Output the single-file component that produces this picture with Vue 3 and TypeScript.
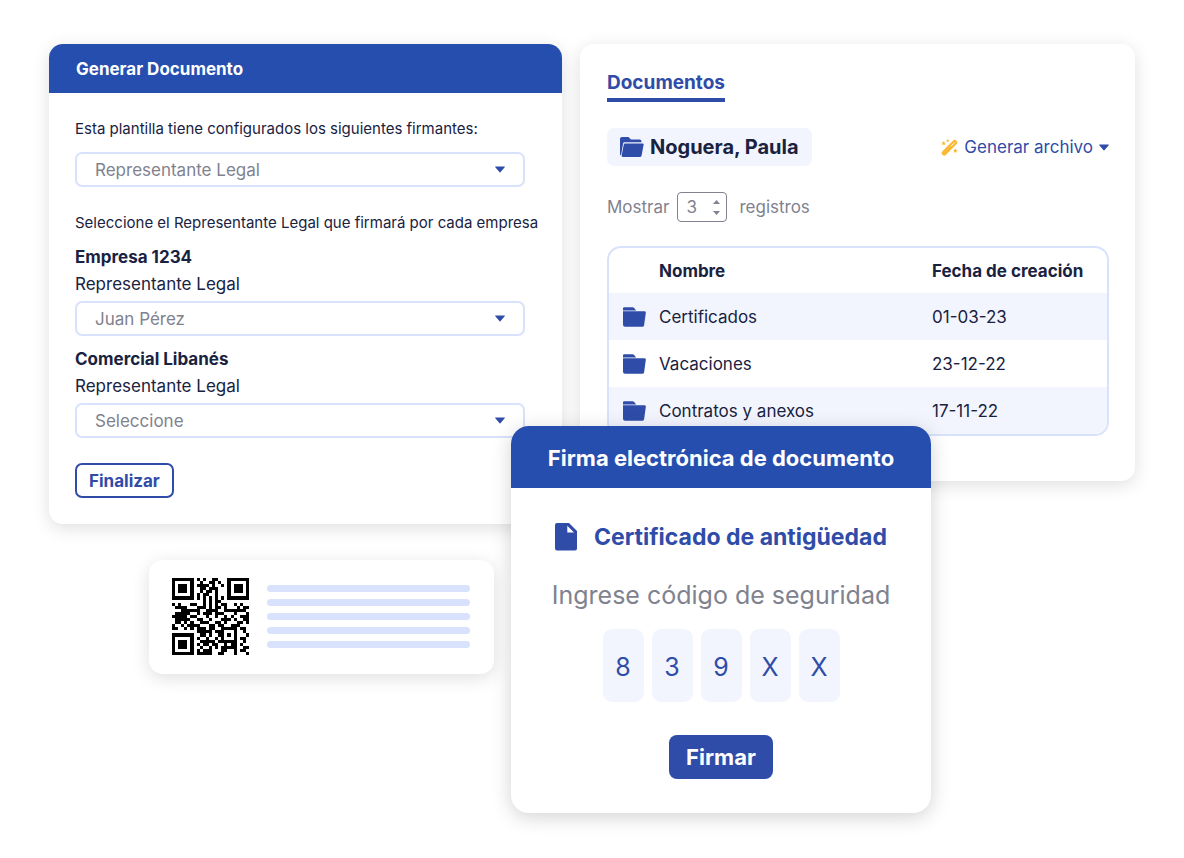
<script setup lang="ts">
import { ref } from 'vue'

interface DocumentFolder {
  name: string
  created: string
}

interface Company {
  id: string
  name: string
  signer: string
}

const template = ref('Representante Legal')
const pageSize = ref(3)
const code = ref<string[]>(['8', '3', '9', 'X', 'X'])

const companies = ref<Company[]>([
  { id: 'empresa', name: 'Empresa 1234', signer: 'Juan Pérez' },
  { id: 'comercial', name: 'Comercial Libanés', signer: 'Seleccione' },
])

const folders: DocumentFolder[] = [
  { name: 'Certificados', created: '01-03-23' },
  { name: 'Vacaciones', created: '23-12-22' },
  { name: 'Contratos y anexos', created: '17-11-22' },
]

const qrRows: string[] = [
  '1111111010100110001111111',
  '1000001001001101001000001',
  '1011101011110100101011101',
  '1011101001101110001011101',
  '1011101001011010001011101',
  '1000001010110010001000001',
  '1111111010101010101111111',
  '0000000000101011000000000',
  '1010001100101010110010100',
  '0111100011101011010001011',
  '0001111110011110011111110',
  '0111110010111011100010001',
  '1111101100010010010100111',
  '0111110011001000111010011',
  '0110101001110011010001101',
  '1001011110001101100111000',
  '1100101011101100111110110',
  '0000000011111011100010010',
  '1111111001101001101010001',
  '1000001010010010100010110',
  '1011101001111101111110010',
  '1011101010110110010110100',
  '1011101001001010111110011',
  '1000001010111000110010110',
  '1111111011111001100010001',
]

const qrPath = qrRows
  .flatMap((row, y) => [...row].map((cell, x) => (cell === '1' ? `M${x} ${y}h1v1h-1z` : '')))
  .join('')

const stepPageSize = (delta: number) => {
  pageSize.value = Math.max(1, pageSize.value + delta)
}
</script>

<template>
  <main class="board">
    <div class="column">
      <form class="card generator" @submit.prevent>
        <h2 class="generator-head">Generar Documento</h2>
        <div class="generator-body">
          <label class="hint" for="template">Esta plantilla tiene configurados los siguientes firmantes:</label>
          <div class="picker">
            <select id="template" v-model="template">
              <option>Representante Legal</option>
            </select>
            <svg class="caret" viewBox="0 0 10 7" aria-hidden="true"><path d="M.6.5h8.8a.4.4 0 0 1 .3.7L5.4 6.3a.5.5 0 0 1-.8 0L.3 1.2A.4.4 0 0 1 .6.5z" /></svg>
          </div>
          <p class="hint second">Seleccione el Representante Legal que firmará por cada empresa</p>
          <section v-for="company in companies" :key="company.id" class="company">
            <h3>{{ company.name }}</h3>
            <label :for="company.id">Representante Legal</label>
            <div class="picker">
              <select :id="company.id" v-model="company.signer">
                <option>Seleccione</option>
                <option>Juan Pérez</option>
              </select>
              <svg class="caret" viewBox="0 0 10 7" aria-hidden="true"><path d="M.6.5h8.8a.4.4 0 0 1 .3.7L5.4 6.3a.5.5 0 0 1-.8 0L.3 1.2A.4.4 0 0 1 .6.5z" /></svg>
            </div>
          </section>
          <button class="finish" type="submit">Finalizar</button>
        </div>
      </form>

      <aside class="card stamp">
        <svg class="qr" viewBox="0 0 25 25" role="img" aria-label="QR" shape-rendering="crispEdges"><path :d="qrPath" /></svg>
        <div class="lines">
          <span v-for="n in 5" :key="n"></span>
        </div>
      </aside>
    </div>

    <section class="card documents">
      <a class="tab" href="#documentos">Documentos</a>
      <div class="toolbar">
        <h2 class="person">
          <svg viewBox="0 0 24 20" aria-hidden="true">
            <path d="M2 0h6.5L11 2.500h8.500a2 2 0 0 1 2 2v.8H4.600a1.600 1.600 0 0 0-1.500 1.200L1.500 15.500 1 18.500A2 2 0 0 1 0 17V2a2 2 0 0 1 2-2z" />
            <path d="M5 6.400h17.600a1 1 0 0 1 1 1.300l-2 10.700A2 2 0 0 1 19.600 20H3.200a1.500 1.500 0 0 1-1.500-1.800L3.800 7.400A1.300 1.300 0 0 1 5 6.400z" />
          </svg>
          Noguera, Paula
        </h2>
        <button class="generate" type="button">
          <svg class="wand" viewBox="0 0 17 17" aria-hidden="true">
            <path class="stick" d="M3.200 14 13.700 3.500" />
            <path class="slot" d="M10.300 6.900 13.400 3.800" />
            <path d="m2.600 2 .7 1.400 1.500.2-1.100 1.100.3 1.500-1.400-.7-1.400.7.300-1.500L.4 3.600l1.500-.2zM6.800 0l.5 1 1.100.2-.8.8.2 1.100-1-.5-1 .5.2-1.100-.8-.8L6.300 1zM14.300 9.200l.7 1.500 1.600.2-1.200 1.200.3 1.600-1.400-.8-1.500.8.300-1.600-1.200-1.200 1.700-.2z" />
          </svg>
          Generar archivo
          <svg class="caret" viewBox="0 0 10 7" aria-hidden="true"><path d="M.6.5h8.8a.4.4 0 0 1 .3.7L5.4 6.3a.5.5 0 0 1-.8 0L.3 1.2A.4.4 0 0 1 .6.5z" /></svg>
        </button>
      </div>
      <div class="page-size">
        <label for="page-size">Mostrar</label>
        <div class="stepper">
          <input id="page-size" v-model.number="pageSize" type="text" inputmode="numeric" />
          <div class="steps">
            <button type="button" aria-label="Más" @click="stepPageSize(1)"><svg viewBox="0 0 7 4" aria-hidden="true"><path d="M0 4 3.500 0 7 4z" /></svg></button>
            <button type="button" aria-label="Menos" @click="stepPageSize(-1)"><svg viewBox="0 0 7 4" aria-hidden="true"><path d="M0 0h7L3.500 4z" /></svg></button>
          </div>
        </div>
        <span>registros</span>
      </div>
      <div class="table-frame">
        <table>
          <thead>
            <tr>
              <th class="icon-cell"></th>
              <th>Nombre</th>
              <th class="date-cell">Fecha de creación</th>
            </tr>
          </thead>
          <tbody>
            <tr v-for="folder in folders" :key="folder.name">
              <td class="icon-cell">
                <svg viewBox="0 0 23 20" aria-hidden="true">
                  <path d="M0 3.500V1.500A1.300 1.300 0 0 1 1.300.2h8.200a2 2 0 0 1 1.500.6l2.200 2.700z" />
                  <path d="M0 4.300h21.300a1.500 1.500 0 0 1 1.500 1.700l-1.700 12.200A1.800 1.800 0 0 1 19.300 19.800H2a2 2 0 0 1-2-2z" />
                </svg>
              </td>
              <td>{{ folder.name }}</td>
              <td>{{ folder.created }}</td>
            </tr>
          </tbody>
        </table>
      </div>
    </section>

    <form class="signature" role="dialog" aria-labelledby="signature-title" @submit.prevent>
      <h2 id="signature-title">Firma electrónica de documento</h2>
      <div class="signature-body">
        <h3>
          <svg viewBox="0 0 22 28" aria-hidden="true">
            <path fill-rule="evenodd" d="M2 0h12l8 8v17.500a2 2 0 0 1-2 2H2a2 2 0 0 1-2-2V2a2 2 0 0 1 2-2zM12.300 2.800v6.700H19z" />
          </svg>
          Certificado de antigüedad
        </h3>
        <p>Ingrese código de seguridad</p>
        <div class="code">
          <input v-for="(_, i) in code" :key="i" v-model="code[i]" type="text" maxlength="1" :aria-label="`Dígito ${i + 1}`" />
        </div>
        <button type="submit">Firmar</button>
      </div>
    </form>
  </main>
</template>

<style>
body {
  margin: 0;
  background: #fff;
}
</style>

<style scoped>
.board {
  --blue: #2f4ca8;
  --head: #264eae;
  --ink: #19223f;
  --grey: #80828f;
  --line: #d9e2fc;
  --tint: #f2f5fd;
  position: relative;
  display: grid;
  grid-template-columns: 513fr 555fr;
  align-items: start;
  gap: 18px;
  min-height: 770px;
  padding: 44px 49px;
  font-family: Inter, 'Liberation Sans', sans-serif;
  font-size: 17px;
  line-height: 24px;
  color: var(--ink);
}

h2,
h3,
p {
  margin: 0;
}

button,
input,
select {
  margin: 0;
  font-family: inherit;
}

button {
  cursor: pointer;
}

svg {
  display: block;
  flex: none;
  fill: var(--blue);
}

.card {
  border-radius: 14px;
  background: #fff;
  box-shadow: 0 4px 18px rgba(0, 0, 0, 0.13);
}

.column {
  display: flex;
  flex-direction: column;
  gap: 36px;
  min-width: 0;
}

.generator {
  overflow: hidden;
}

.generator-head {
  padding: 13px 27px 11px;
  background: var(--head);
  color: #fff;
  font-size: 17px;
  line-height: 25px;
}

.generator-body {
  padding: 26px;
}

.hint {
  display: block;
  font-size: 15px;
  line-height: 20px;
  white-space: nowrap;
}

.second {
  margin: 26px 0 12px;
}

.picker {
  position: relative;
  margin-top: 5px;
  margin-right: 11px;
}

.hint + .picker {
  margin-top: 13px;
}

select {
  display: block;
  width: 100%;
  height: 35px;
  padding: 0 40px 0 18px;
  appearance: none;
  border: 2px solid var(--line);
  border-radius: 7px;
  background: #fff;
  color: var(--grey);
  font-size: 17px;
}

.caret {
  width: 10px;
  height: 7px;
}

.picker .caret {
  position: absolute;
  top: 14px;
  right: 20px;
  pointer-events: none;
}

.company {
  margin-bottom: 11px;
}

.company h3 {
  margin-bottom: 3px;
  font-size: 17px;
  line-height: 24px;
}

.company label {
  display: block;
}

.finish {
  display: block;
  height: 35px;
  margin-top: 25px;
  padding: 0 12px;
  border: 2px solid var(--blue);
  border-radius: 7px;
  background: #fff;
  color: var(--blue);
  font-size: 17px;
  font-weight: 700;
}

.stamp {
  display: flex;
  align-items: center;
  gap: 18px;
  width: 298px;
  margin-left: 100px;
  padding: 18px 24px 19px 23px;
}

.qr {
  width: 77px;
  height: 77px;
  fill: #000;
}

.lines {
  display: flex;
  flex: 1;
  flex-direction: column;
  gap: 7px;
}

.lines span {
  height: 7px;
  border-radius: 4px;
  background: var(--line);
}

.documents {
  padding: 27px 26px 45px 27px;
}

.tab {
  display: inline-block;
  padding-bottom: 3px;
  border-bottom: 4px solid var(--blue);
  color: var(--blue);
  font-size: 19px;
  font-weight: 700;
  text-decoration: none;
}

.toolbar {
  display: flex;
  align-items: center;
  justify-content: space-between;
  margin-top: 26px;
}

.person {
  display: flex;
  align-items: center;
  gap: 6px;
  height: 38px;
  padding: 0 13px;
  border-radius: 7px;
  background: var(--tint);
  font-size: 20px;
}

.person svg {
  width: 24px;
  height: 20px;
}

.generate {
  display: flex;
  align-items: center;
  gap: 6px;
  padding: 0;
  border: 0;
  background: none;
  color: var(--blue);
  font-size: 17px;
}

.wand {
  width: 17px;
  height: 17px;
  fill: #fbb832;
  stroke-linecap: round;
}

.stick {
  stroke: #fbb832;
  stroke-width: 5;
}

.slot {
  stroke: #fff;
  stroke-width: 1;
}

.page-size {
  display: flex;
  align-items: center;
  margin: 26px 0 24px;
  color: var(--grey);
}

.stepper {
  display: flex;
  align-items: center;
  justify-content: space-between;
  box-sizing: border-box;
  width: 50px;
  height: 30px;
  margin: 0 12px 0 8px;
  padding: 0 6px 0 8px;
  border: 1px solid var(--grey);
  border-radius: 4px;
}

.stepper input {
  width: 20px;
  padding: 0;
  border: 0;
  outline: 0;
  background: none;
  color: var(--grey);
  font-size: 17px;
}

.steps {
  display: grid;
  gap: 7px;
}

.steps button {
  padding: 0;
  border: 0;
  background: none;
}

.steps svg {
  width: 7px;
  height: 4px;
  fill: var(--grey);
}

.table-frame {
  overflow: hidden;
  border: 2px solid var(--line);
  border-radius: 14px;
}

table {
  width: 100%;
  border-spacing: 0;
  table-layout: fixed;
}

th,
td {
  height: 47px;
  padding: 0;
  text-align: left;
}

th {
  height: 45px;
}

tbody tr:nth-child(odd) {
  background: var(--tint);
}

.icon-cell {
  width: 36px;
  padding-left: 14px;
}

.icon-cell svg {
  width: 23px;
  height: 20px;
}

.date-cell {
  width: 175px;
}

.signature {
  position: absolute;
  top: 426px;
  left: calc(50% - 81px);
  width: 420px;
  overflow: hidden;
  border-radius: 18px;
  background: #fff;
  box-shadow: 0 4px 20px rgba(0, 0, 0, 0.18);
}

.signature h2 {
  padding: 17px 0 15px;
  background: var(--head);
  color: #fff;
  font-size: 22px;
  line-height: 30px;
  text-align: center;
}

.signature-body {
  display: flex;
  flex-direction: column;
  align-items: center;
  padding: 34px 24px;
}

.signature h3 {
  display: flex;
  align-items: center;
  gap: 17px;
  color: var(--blue);
  font-size: 23px;
  line-height: 30px;
}

.signature h3 svg {
  width: 22px;
  height: 28px;
}

.signature p {
  margin: 27px 0 18px;
  color: var(--grey);
  font-size: 25px;
  line-height: 32px;
}

.code {
  display: flex;
  gap: 8px;
}

.code input {
  box-sizing: border-box;
  width: 41px;
  height: 73px;
  padding: 3px 0 0;
  border: 0;
  border-radius: 9px;
  background: var(--tint);
  color: var(--blue);
  font-size: 25px;
  text-align: center;
}

.signature button {
  height: 44px;
  margin-top: 33px;
  padding: 0 17px;
  border: 0;
  border-radius: 8px;
  background: var(--blue);
  color: #fff;
  font-size: 22px;
  font-weight: 700;
}
</style>
